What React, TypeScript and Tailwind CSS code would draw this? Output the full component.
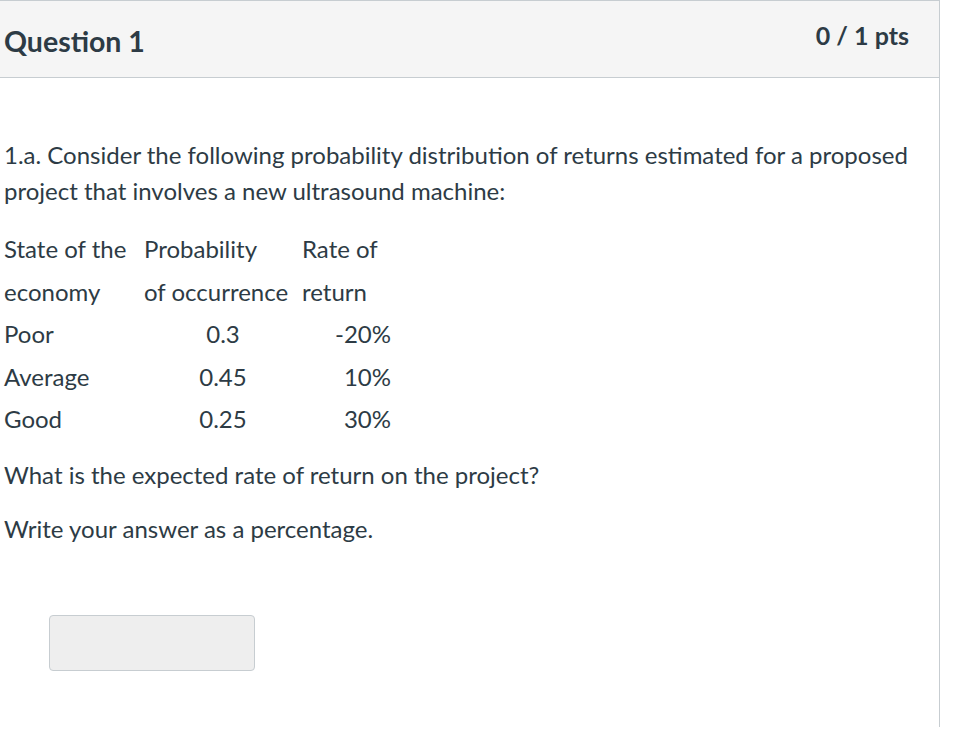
export default function App() {
  const rows = [
    ["Poor", "0.3", "-20%"],
    ["Average", "0.45", "10%"],
    ["Good", "0.25", "30%"],
  ];

  return (
    <div className="min-h-[730px] bg-white font-['Lato','Liberation_Sans',sans-serif] text-[#2d3b45]">
      <div className="w-[940px] min-h-[727px] border-t border-r border-[#c7cdd1]">
        <div className="flex h-[77px] items-start justify-between border-b border-[#c7cdd1] bg-[#f5f5f5] pl-[4px] pr-[30px]">
          <h2 className="mt-[22px] text-[28.5px] font-bold leading-[36px]">Question 1</h2>
          <div className="mt-[18px] text-[25px] font-bold leading-[32px]">0 / 1 pts</div>
        </div>

        <div className="pl-[4px] pt-[59px] text-[24px] leading-[36px]">
          <p>
            1.a. Consider the following probability distribution of returns estimated for a proposed project that
            involves a new ultrasound machine:
          </p>

          <table className="mt-[19px] border-collapse">
            <tbody>
              <tr className="h-[42.5px]">
                <td className="w-[140px] p-0 align-middle">State of the</td>
                <td className="w-[158px] p-0 align-middle">Probability</td>
                <td className="w-[89px] p-0 align-middle">Rate of</td>
              </tr>
              <tr className="h-[42.5px]">
                <td className="p-0 align-middle">economy</td>
                <td className="p-0 align-middle">of occurrence</td>
                <td className="p-0 align-middle">return</td>
              </tr>
              {rows.map(([state, prob, rate]) => (
                <tr key={state} className="h-[42.5px]">
                  <td className="p-0 align-middle">{state}</td>
                  <td className="p-0 text-center align-middle">{prob}</td>
                  <td className="p-0 text-right align-middle">{rate}</td>
                </tr>
              ))}
            </tbody>
          </table>

          <p className="mt-[16px]">What is the expected rate of return on the project?</p>
          <p className="mt-[18px]">Write your answer as a percentage.</p>

          <div className="ml-[45px] mt-[68px] h-[56px] w-[206px] rounded-[4px] border border-[#c7cdd1] bg-[#eeeeee]" />
        </div>
      </div>
    </div>
  );
}
